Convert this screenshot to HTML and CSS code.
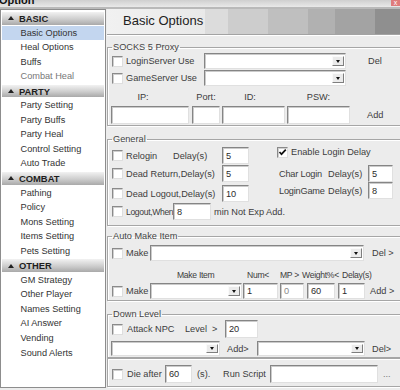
FILE: index.html
```html
<!DOCTYPE html>
<html lang="en">
<head>
  <title>Option</title>
  <link rel="stylesheet" href="styles.css">
</head>
<body>

<div class="window">

  <div class="titlebar">
    <span class="title">Option</span>
    <span class="close">x</span>
  </div>

  <div class="frame">

    <!-- left menu -->
    <div class="sidebar">
      <div class="cat"><span class="arrow"></span>BASIC</div>
      <div class="item selected">Basic Options</div>
      <div class="item">Heal Options</div>
      <div class="item">Buffs</div>
      <div class="item dim">Combat Heal</div>
      <div class="cat"><span class="arrow"></span>PARTY</div>
      <div class="item">Party Setting</div>
      <div class="item">Party Buffs</div>
      <div class="item">Party Heal</div>
      <div class="item">Control Setting</div>
      <div class="item">Auto Trade</div>
      <div class="cat"><span class="arrow"></span>COMBAT</div>
      <div class="item">Pathing</div>
      <div class="item">Policy</div>
      <div class="item">Mons Setting</div>
      <div class="item">Items Setting</div>
      <div class="item">Pets Setting</div>
      <div class="cat"><span class="arrow"></span>OTHER</div>
      <div class="item">GM Strategy</div>
      <div class="item">Other Player</div>
      <div class="item">Names Setting</div>
      <div class="item">AI Answer</div>
      <div class="item">Vending</div>
      <div class="item">Sound Alerts</div>
    </div>

    <div class="main">
      <div class="banner"><span>Basic Options</span></div>

      <!-- SOCKS -->
      <fieldset class="group socks">
        <legend>SOCKS 5 Proxy</legend>
        <div class="row combo-row">
          <span class="check"></span>
          <span class="lbl server-lbl">LoginServer Use</span>
          <span class="combo server-combo"><span class="drop"></span></span>
          <span class="lbl del-link">Del</span>
        </div>
        <div class="row combo-row second">
          <span class="check"></span>
          <span class="lbl server-lbl">GameServer Use</span>
          <span class="combo server-combo"><span class="drop"></span></span>
        </div>
        <div class="row proxy-heads">
          <span class="lbl ip-col ip-head">IP:</span>
          <span class="lbl port-col">Port:</span>
          <span class="lbl id-col id-head">ID:</span>
          <span class="lbl psw-col">PSW:</span>
        </div>
        <div class="row proxy-inputs">
          <span class="field ip-col"></span>
          <span class="field port-col"></span>
          <span class="field id-col"></span>
          <span class="field psw-col"></span>
          <span class="lbl add-link">Add</span>
        </div>
      </fieldset>

      <!-- General -->
      <fieldset class="group general">
        <legend>General</legend>
        <div class="general-cols">
          <div class="left-col">
            <div class="row g-row g1">
              <span class="check"></span>
              <span class="lbl relogin-lbl">Relogin</span>
              <span class="lbl delay-lbl">Delay(s)</span>
              <span class="field delay-field">5</span>
            </div>
            <div class="row g-row g2">
              <span class="check"></span>
              <span class="lbl dead-lbl">Dead Return,Delay(s)</span>
              <span class="field delay-field">5</span>
            </div>
            <div class="row g-row g3">
              <span class="check"></span>
              <span class="lbl dead-lbl">Dead Logout,Delay(s)</span>
              <span class="field delay-field">10</span>
            </div>
          </div>
          <div class="right-col">
            <div class="row r1">
              <span class="check checked">
                <svg width="9" height="9" viewBox="0 0 9 9"><path d="M1.5 4 L3.5 6.2 L7.8 1.6" fill="none" stroke="#111" stroke-width="1.7"/></svg>
              </span>
              <span class="lbl enable-lbl">Enable Login Delay</span>
            </div>
            <div class="row g-row r2">
              <span class="lbl char-lbl">Char Login</span>
              <span class="lbl char-delay">Delay(s)</span>
              <span class="field small-field">5</span>
            </div>
            <div class="row g-row r3">
              <span class="lbl char-lbl">LoginGame</span>
              <span class="lbl char-delay">Delay(s)</span>
              <span class="field small-field">8</span>
            </div>
          </div>
        </div>
        <div class="row g-row g4">
          <span class="check"></span>
          <span class="lbl relogin-lbl when-lbl">Logout,When</span>
          <span class="field when-field">8</span>
          <span class="lbl min-lbl">min Not Exp Add.</span>
        </div>
      </fieldset>

      <!-- Auto Make Item -->
      <fieldset class="group automake">
        <legend>Auto Make Item</legend>
        <div class="row make-row m1">
          <span class="check"></span>
          <span class="lbl make-lbl">Make</span>
          <span class="combo make-wide"><span class="drop"></span></span>
          <span class="lbl del-more">Del &gt;</span>
        </div>
        <div class="row make-heads">
          <span class="head-gap"></span>
          <span class="lbl h-item">Make Item</span>
          <span class="lbl h-num">Num&lt;</span>
          <span class="lbl h-mp">MP &gt;</span>
          <span class="lbl h-weight">Weight%&lt;</span>
          <span class="lbl">Delay(s)</span>
        </div>
        <div class="row make-row m2">
          <span class="check"></span>
          <span class="lbl make-lbl">Make</span>
          <span class="combo make-small"><span class="drop"></span></span>
          <span class="field f-num">1</span>
          <span class="field f-mp gray">0</span>
          <span class="field f-weight">60</span>
          <span class="field f-delay">1</span>
          <span class="lbl add-more">Add &gt;</span>
        </div>
      </fieldset>

      <!-- Down Level -->
      <fieldset class="group downlevel">
        <legend>Down Level</legend>
        <div class="row d1">
          <span class="check"></span>
          <span class="lbl npc-lbl">Attack NPC</span>
          <span class="lbl level-lbl">Level &nbsp;&gt;</span>
          <span class="field level-field">20</span>
        </div>
        <div class="row d2">
          <span class="combo npc-combo"><span class="drop"></span></span>
          <span class="lbl add-npc">Add&gt;</span>
          <span class="combo npc-combo2"><span class="drop"></span></span>
          <span class="lbl del-npc">Del&gt;</span>
        </div>
      </fieldset>

      <div class="group diebox">
        <div class="row die-row">
          <span class="check"></span>
          <span class="lbl die-lbl">Die after</span>
          <span class="field die-field">60</span>
          <span class="lbl sec-lbl">(s).</span>
          <span class="lbl run-lbl">Run Script</span>
          <span class="field script-field"></span>
          <span class="lbl dots">...</span>
        </div>
      </div>
    </div>

  </div>
</div>

</body>
</html>
```

FILE: styles.css
```css
body{
  margin: 0;
  width: 400px;
  height: 390px;
  overflow: hidden;
  background-color: #ececec;
  font-family: "Liberation Sans", Arial, sans-serif;
  font-size: 9.2px;
  color: #3c3c3c;
}

.window{
  width: 400px;
  height: 390px;
  display: flex;
  flex-direction: column;
}

.titlebar{
  height: 7px;
  flex: none;
  display: flex;
  align-items: flex-end;
  justify-content: space-between;
  overflow: hidden;
  background: linear-gradient(#cfcfcf, #e9e9e9);
  border-bottom: 2px solid #b9b9b9;
}
.title{
  font-weight: bold;
  font-size: 11px;
  line-height: 11px;
  color: #111;
  margin-left: -1px;
  margin-bottom: 1px;
}
.close{
  align-self: flex-start;
  width: 9px;
  height: 6px;
  background-color: #df7b7b;
  color: #fff;
  font-size: 7px;
  line-height: 5px;
  text-align: center;
}

.frame{
  flex: 1;
  display: flex;
  min-height: 0;
}

/* menu */
.sidebar{
  width: 106px;
  flex: none;
  box-sizing: border-box;
  margin-bottom: 2px;
  padding: 1px;
  background-color: #fff;
  border: 1px solid #8d8d8d;
  overflow: hidden;
}
.cat{
  height: 12.55px;
  margin: 1px 0;
  display: flex;
  align-items: center;
  padding-left: 6px;
  background: linear-gradient(#f2f2f2, #cdcdcd 55%, #a9a9a9);
  font-weight: bold;
  font-size: 9.4px;
  color: #1e1e1e;
}
.arrow{
  width: 0;
  height: 0;
  border-left: 3.5px solid transparent;
  border-right: 3.5px solid transparent;
  border-bottom: 4px solid #222;
  margin-right: 5px;
}
.item{
  height: 14.55px;
  line-height: 14.55px;
  padding-left: 18.5px;
  color: #333;
  white-space: nowrap;
}
.item.selected{
  background-color: #c3d6ef;
}
.item.dim{
  color: #777;
}

/* right side */
.main{
  flex: 1;
  min-width: 0;
  padding-left: 1px;
}
.banner{
  height: 23px;
  padding-bottom: 2px;
  line-height: 23px;
  padding-left: 16px;
  font-size: 13px;
  color: #222;
  border-bottom: 1px solid #a3a3a3;
  box-shadow: 0 1px 0 #fff;
  background: linear-gradient(to right,
    #f1f1f1 0, #e9e9e9 98px,
    #dcdcdc 98px, #dcdcdc 121px,
    #cdcdcd 121px, #cdcdcd 161px,
    #bfbfbf 161px, #bfbfbf 201px,
    #b1b1b1 201px, #b1b1b1 228px,
    #a3a3a3 228px, #a3a3a3 268px,
    #8f8f8f 268px);
}

.group{
  margin: 0 -6px 0 0;
  padding: 0 0 1px 4px;
  border: 1px solid #a6a6a6;
  box-shadow: inset 1px 1px 0 #fff, 1px 1px 0 #fff;
  min-width: 0;
}
.group legend{
  padding: 0 1px;
  line-height: 12px;
  font-size: 9.2px;
  color: #444;
}

.row{
  display: flex;
  align-items: center;
  white-space: nowrap;
}
.lbl{
  flex: none;
  color: #3c3c3c;
}

.check{
  flex: none;
  width: 11px;
  height: 11px;
  box-sizing: border-box;
  background-color: #fff;
  border: 1px solid;
  border-color: #8a8a8a #dedede #dedede #8a8a8a;
  box-shadow: inset 1px 1px 0 #cfcfcf;
  display: flex;
  align-items: center;
  justify-content: center;
}
.check svg{
  display: block;
}

.field{
  flex: none;
  box-sizing: border-box;
  background-color: #fff;
  border: 1px solid;
  border-color: #858585 #e0e0e0 #e0e0e0 #858585;
  box-shadow: inset 1px 1px 0 #cbcbcb;
  padding-left: 3px;
  color: #2b2b2b;
  display: flex;
  align-items: center;
}
.field.gray{
  color: #888;
}

.combo{
  flex: none;
  box-sizing: border-box;
  height: 100%;
  background-color: #fff;
  border: 1px solid;
  border-color: #858585 #e0e0e0 #e0e0e0 #858585;
  box-shadow: inset 1px 1px 0 #cbcbcb;
  display: flex;
  justify-content: flex-end;
  align-items: center;
  padding-right: 1px;
}
.drop{
  width: 12px;
  height: calc(100% - 4px);
  box-sizing: border-box;
  background-color: #ebebeb;
  border: 1px solid;
  border-color: #fafafa #7e7e7e #7e7e7e #fafafa;
  display: flex;
  align-items: center;
  justify-content: center;
}
.drop::after{
  content: "";
  border-left: 2.5px solid transparent;
  border-right: 2.5px solid transparent;
  border-top: 3px solid #111;
}

/* socks */
.socks{
  margin-top: 6px;
}
.combo-row{
  height: 16px;
}
.combo-row.second{
  margin-top: 1px;
}
.server-lbl{
  width: 78px;
  margin-left: 3px;
}
.server-combo{
  width: 142px;
}
.del-link{
  margin-left: 22px;
}
.proxy-heads{
  height: 14px;
  margin-top: 4px;
}
.proxy-heads .lbl{
  text-align: center;
  box-sizing: border-box;
}
.proxy-inputs{
  height: 18px;
  margin-top: 2px;
}
.proxy-inputs .field{
  height: 18px;
}
.ip-col{
  width: 78px;
  margin-left: -1px;
}
.ip-head{
  padding-right: 14px;
}
.port-col{
  width: 28px;
  margin-left: 3px;
}
.id-col{
  width: 63px;
  margin-left: 2px;
}
.id-head{
  padding-right: 7px;
}
.psw-col{
  width: 63px;
  margin-left: 2px;
}
.add-link{
  margin-left: 17px;
}

/* general */
.general{
  margin-top: 7px;
  padding-bottom: 5px;
}
.general-cols{
  display: flex;
  gap: 5px;
}
.left-col{
  width: 160px;
  flex: none;
}
.g-row{
  height: 17px;
}
.g-row .field{
  height: 17px;
}
.g1{
  margin-top: 2px;
}
.g2{
  margin-top: 1px;
}
.g3{
  margin-top: 3px;
}
.g4{
  margin-top: 1px;
}
.relogin-lbl{
  width: 47px;
  margin-left: 3px;
}
.when-lbl{
  font-size: 8.6px;
  letter-spacing: -0.35px;
}
.delay-lbl{
  width: 49px;
}
.dead-lbl{
  width: 96px;
  margin-left: 3px;
}
.delay-field{
  width: 27px;
}
.when-field{
  width: 38px;
}
.min-lbl{
  margin-left: 3px;
}
.r1{
  height: 14px;
}
.enable-lbl{
  margin-left: 3px;
}
.r2{
  margin-top: 6px;
}
.char-lbl{
  width: 49px;
  margin-left: 2px;
  letter-spacing: -0.2px;
}
.char-delay{
  width: 40px;
}
.small-field{
  width: 25px;
}

/* auto make */
.automake{
  margin-top: 4px;
}
.make-row{
  height: 16px;
}
.m1{
  margin-top: 3px;
}
.make-lbl{
  width: 24px;
  margin-left: 3px;
}
.make-wide{
  width: 214px;
}
.del-more{
  margin-left: 8px;
}
.make-heads{
  height: 14px;
  margin-top: 7px;
  font-size: 8.6px;
  letter-spacing: -0.3px;
}
.head-gap{
  width: 65px;
}
.h-item{
  width: 70px;
}
.h-num{
  width: 33px;
}
.h-mp{
  width: 22px;
}
.h-weight{
  width: 40px;
}
.m2{
  margin-top: 1px;
}
.make-row .field{
  height: 16px;
}
.make-small{
  width: 92px;
}
.f-num{
  width: 35px;
  margin-left: 1px;
}
.f-mp{
  width: 24px;
  margin-left: 2px;
}
.f-weight{
  width: 28px;
  margin-left: 3px;
}
.f-delay{
  width: 27px;
  margin-left: 3px;
}
.add-more{
  margin-left: 5px;
}

/* down level */
.downlevel{
  margin-top: 7px;
}
.d1{
  height: 18px;
}
.npc-lbl{
  width: 58px;
  margin-left: 4px;
}
.level-lbl{
  width: 40px;
}
.level-field{
  width: 33px;
  height: 18px;
}
.d2{
  height: 15px;
  margin-top: 3px;
}
.npc-combo{
  width: 109px;
  margin-left: -1px;
}
.add-npc{
  width: 30px;
  margin-left: 7px;
}
.npc-combo2{
  width: 108px;
}
.del-npc{
  margin-left: 7px;
}

.diebox{
  padding: 6px 0 3px 4px;
}
.die-row{
  height: 18px;
}
.die-row .field{
  height: 18px;
}
.die-lbl{
  width: 38px;
  margin-left: 4px;
}
.die-field{
  width: 27px;
}
.sec-lbl{
  width: 26px;
  margin-left: 5px;
}
.run-lbl{
  width: 47px;
}
.script-field{
  width: 108px;
}
.dots{
  margin-left: 5px;
  color: #777;
}
```
